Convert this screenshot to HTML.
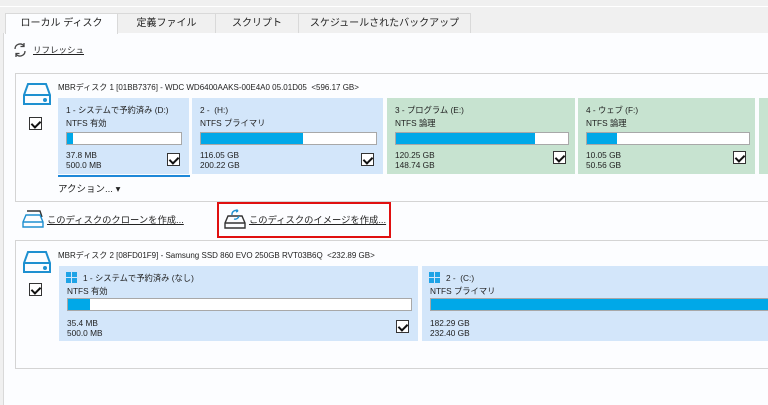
<!DOCTYPE html><html><head><meta charset="utf-8"><style>
*{box-sizing:border-box;margin:0;padding:0}
body{width:768px;height:405px;overflow:hidden;background:#f0f0f0;font-family:"Liberation Sans","Noto Sans CJK JP",sans-serif;font-size:10px;color:#222;position:relative}
.a{position:absolute}
.tab{position:absolute;top:13px;height:20px;border:1px solid #d9d9d9;border-bottom:none;background:#f0f0f0;font-size:10px;text-align:center;line-height:19px;color:#222;white-space:nowrap}
.cb{position:absolute;width:13px;height:13px;border:1px solid #333;background:#fff}
.cb:after{content:"";position:absolute;left:3px;top:1px;width:4px;height:7px;border:solid #111;border-width:0 2px 2px 0;transform:rotate(45deg)}
.p{position:absolute;background:#d3e6fa}
.g{background:#c7e3d0}
.p .t{position:absolute;left:8px;font-size:8.3px;white-space:nowrap;line-height:10px}
.bar{position:absolute;left:8px;height:13px;border:1px solid #a8a8a8;background:#fff}
.bar i{display:block;height:100%;background:#00a8e8}
.u{text-decoration:underline;font-size:9.3px;white-space:nowrap}
.win{position:absolute;width:12px;height:12px}
.win b{position:absolute;width:5px;height:5px;background:#1ea3e6}
</style></head><body>
<div class="a" style="left:0;top:6px;width:768px;height:1px;background:#fff"></div>
<div class="a" style="left:3px;top:33px;width:765px;height:372px;background:#fcfdff;border-left:1px solid #d9d9d9"></div>
<div class="tab" style="left:5px;width:113px;background:#fcfdff;height:21px">ローカル ディスク</div>
<div class="tab" style="left:117px;width:99px">定義ファイル</div>
<div class="tab" style="left:215px;width:84px">スクリプト</div>
<div class="tab" style="left:298px;width:173px">スケジュールされたバックアップ</div>
<svg class="a" style="left:12px;top:42px" width="16" height="16" viewBox="0 0 16 16" fill="none" stroke="#444" stroke-width="1.3"><path d="M3 7a5 5 0 0 1 9-3"/><path d="M12 1v3.5H8.5"/><path d="M13 9a5 5 0 0 1-9 3"/><path d="M4 15v-3.5h3.5"/></svg>
<div class="a u" style="left:33px;top:44px;font-size:8.5px">リフレッシュ</div>

<div class="a" style="left:15px;top:73px;width:760px;height:129px;border:1px solid #d4d4d4"></div>
<svg class="a" style="left:22px;top:82px" width="30" height="24" viewBox="0 0 30 24" fill="none" stroke="#1e90d0" stroke-width="2"><path d="M6 2h18l4 11v9H2v-9z"/><path d="M2 13h26"/><circle cx="23" cy="18" r="1" fill="#1e90d0"/></svg>
<div class="a" style="left:58px;top:82px;font-size:8px;white-space:nowrap">MBRディスク 1 [01BB7376] - WDC WD6400AAKS-00E4A0 05.01D05 &nbsp;&lt;596.17 GB&gt;</div>
<div class="cb" style="left:29px;top:117px"></div>

<div class="p" style="left:58px;top:98px;width:131px;height:76px"><div class="t" style="top:7px">1 - システムで予約済み (D:)</div><div class="t" style="top:20px">NTFS 有効</div><div class="bar" style="top:34px;width:116px"><i style="width:6px"></i></div><div class="t" style="top:52px">37.8 MB<br>500.0 MB</div><div class="cb" style="left:109px;top:55px"></div></div>
<div class="a" style="left:58px;top:175px;width:132px;height:2px;background:#1e88d8"></div>
<div class="p" style="left:192px;top:98px;width:191px;height:76px"><div class="t" style="top:7px">2 - &nbsp;(H:)</div><div class="t" style="top:20px">NTFS プライマリ</div><div class="bar" style="top:34px;width:177px"><i style="width:102px"></i></div><div class="t" style="top:52px">116.05 GB<br>200.22 GB</div><div class="cb" style="left:169px;top:55px"></div></div>
<div class="p g" style="left:387px;top:98px;width:188px;height:76px"><div class="t" style="top:7px">3 - プログラム (E:)</div><div class="t" style="top:20px">NTFS 論理</div><div class="bar" style="top:34px;width:174px"><i style="width:139px"></i></div><div class="t" style="top:52px">120.25 GB<br>148.74 GB</div><div class="cb" style="left:166px;top:53px"></div></div>
<div class="p g" style="left:578px;top:98px;width:177px;height:76px"><div class="t" style="top:7px">4 - ウェブ (F:)</div><div class="t" style="top:20px">NTFS 論理</div><div class="bar" style="top:34px;width:164px"><i style="width:30px"></i></div><div class="t" style="top:52px">10.05 GB<br>50.56 GB</div><div class="cb" style="left:155px;top:53px"></div></div>
<div class="p g" style="left:759px;top:98px;width:20px;height:76px"></div>
<div class="a" style="left:58px;top:181px;font-size:9.5px">アクション... ▾</div>

<svg class="a" style="left:22px;top:209px" width="22" height="20" viewBox="0 0 22 20" fill="none" stroke-width="1.4"><path d="M5 2h13l2 6" stroke="#333"/><path d="M4 6h14l3 7v5H1v-5z" stroke="#1e90d0"/><path d="M1 13h20" stroke="#1e90d0"/></svg>
<div class="a u" style="left:47px;top:212px">このディスクのクローンを作成...</div>
<div class="a" style="left:217px;top:202px;width:174px;height:36px;border:2px solid #e01010"></div>
<svg class="a" style="left:224px;top:208px" width="22" height="22" viewBox="0 0 22 22" fill="none" stroke-width="1.4"><path d="M4 8h14l3 7v5H1v-5z" stroke="#333"/><path d="M1 15h20" stroke="#333"/><path d="M8 7a4 4 0 0 1 6-4l-1.5-1.5M14 3l-2 1" stroke="#1e90d0"/><path d="M15 8a4 4 0 0 1-5 3" stroke="#1e90d0"/></svg>
<div class="a u" style="left:249px;top:212px">このディスクのイメージを作成...</div>

<div class="a" style="left:15px;top:240px;width:760px;height:129px;border:1px solid #d4d4d4"></div>
<svg class="a" style="left:22px;top:250px" width="30" height="24" viewBox="0 0 30 24" fill="none" stroke="#1e90d0" stroke-width="2"><path d="M6 2h18l4 11v9H2v-9z"/><path d="M2 13h26"/><circle cx="23" cy="18" r="1" fill="#1e90d0"/></svg>
<div class="a" style="left:58px;top:250px;font-size:8px;white-space:nowrap">MBRディスク 2 [08FD01F9] - Samsung SSD 860 EVO 250GB RVT03B6Q &nbsp;&lt;232.89 GB&gt;</div>
<div class="cb" style="left:29px;top:283px"></div>
<div class="p" style="left:59px;top:266px;width:359px;height:75px"><div class="win" style="left:7px;top:6px"><b style="left:0;top:0"></b><b style="left:6px;top:0"></b><b style="left:0;top:6px"></b><b style="left:6px;top:6px"></b></div><div class="t" style="left:24px;top:7px">1 - システムで予約済み (なし)</div><div class="t" style="top:20px">NTFS 有効</div><div class="bar" style="top:32px;width:345px"><i style="width:22px"></i></div><div class="t" style="top:52px">35.4 MB<br>500.0 MB</div><div class="cb" style="left:337px;top:54px"></div></div>
<div class="p" style="left:422px;top:266px;width:360px;height:75px"><div class="win" style="left:7px;top:6px"><b style="left:0;top:0"></b><b style="left:6px;top:0"></b><b style="left:0;top:6px"></b><b style="left:6px;top:6px"></b></div><div class="t" style="left:24px;top:7px">2 - &nbsp;(C:)</div><div class="t" style="top:20px">NTFS プライマリ</div><div class="bar" style="top:32px;width:360px"><i style="width:100%"></i></div><div class="t" style="top:52px">182.29 GB<br>232.40 GB</div></div>
</body></html>
